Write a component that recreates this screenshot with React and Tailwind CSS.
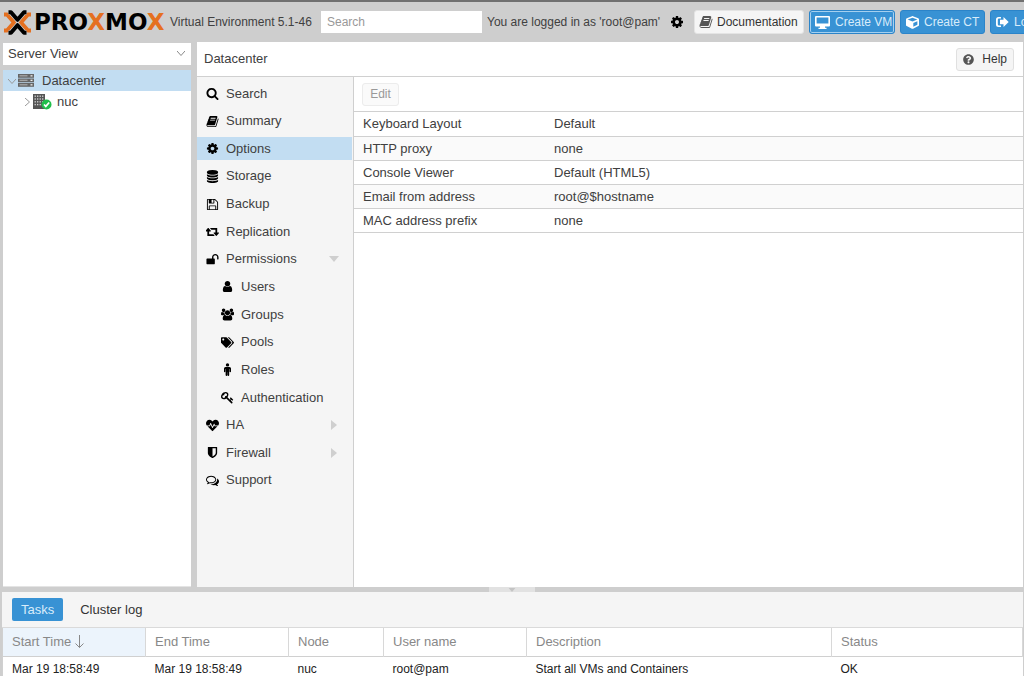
import { useState } from 'react'
import { FaCube, FaHeartbeat, FaQuestionCircle, FaTags } from 'react-icons/fa'

// ── ICONS ──
function Glyph({ d, className, viewBox = '0 0 1792 1792' }) {
  return (
    <svg viewBox={viewBox} className={className} fill="currentColor" aria-hidden="true">
      <path d={d} />
    </svg>
  )
}

const PATHS = {
  search: 'M1216 832q0-185-131.5-316.5t-316.5-131.5-316.5 131.5-131.5 316.5 131.5 316.5 316.5 131.5 316.5-131.5 131.5-316.5zm512 832q0 52-38 90t-90 38q-54 0-90-38l-343-342q-179 124-399 124-143 0-273.5-55.5t-225-150-150-225-55.5-273.5 55.5-273.5 150-225 225-150 273.5-55.5 273.5 55.5 225 150 150 225 55.5 273.5q0 220-124 399l343 343q37 37 37 90z',
  book: 'M1703 478q40 57 18 129l-275 906q-19 64-76.5 107.5t-122.5 43.5h-923q-77 0-148.5-53.5t-99.5-131.5q-24-67-2-127 0-4 3-27t4-37q1-8-3-21.5t-3-19.5q2-11 8-21t16.5-23.5 16.5-23.5q23-38 45-91.5t30-91.5q3-10 .5-30t-.5-28q3-11 17-28t17-23q21-36 42-92t25-90q1-9-2.5-32t.5-28q4-13 22-30.5t22-22.5q19-26 42.5-84.5t27.5-96.5q1-8-3-25.5t-2-26.5q2-8 9-18t18-23 17-21q8-12 16.5-30.5t15-35 16-36 19.5-32 26.5-23.5 36-11.5 47.5 5.5l-1 3q38-9 51-9h761q74 0 114 56t18 130l-274 906q-36 119-71.5 153.5t-128.5 34.5h-869q-27 0-38 15-11 16-1 43 24 70 144 70h923q29 0 56-15.5t35-41.5l300-987q7-22 5-57 38 15 59 43zm-1064 2q-4 13 2 22.5t20 9.5h608q13 0 25.5-9.5t16.5-22.5l21-64q4-13-2-22.5t-20-9.5h-608q-13 0-25.5 9.5t-16.5 22.5zm-83 256q-4 13 2 22.5t20 9.5h608q13 0 25.5-9.5t16.5-22.5l21-64q4-13-2-22.5t-20-9.5h-608q-13 0-25.5 9.5t-16.5 22.5z',
  gear: 'M1152 896q0-106-75-181t-181-75-181 75-75 181 75 181 181 75 181-75 75-181zm512-109v222q0 12-8 23t-20 13l-185 28q-19 54-39 91 35 50 107 138 10 12 10 25t-9 23q-27 37-99 108t-94 71q-12 0-26-9l-138-108q-44 23-91 38-16 136-29 186-7 28-36 28h-222q-14 0-24.5-8.5t-11.5-21.5l-28-184q-49-16-90-37l-141 107q-10 9-25 9-14 0-25-11-126-114-165-168-7-10-7-23 0-12 8-23 15-21 51-66.5t54-70.5q-27-50-41-99l-183-27q-13-2-21-12.5t-8-23.5v-222q0-12 8-23t19-13l186-28q14-46 39-92-40-57-107-138-10-12-10-24 0-10 9-23 26-36 98.5-107.5t94.5-71.5q13 0 26 10l138 107q44-23 91-38 16-136 29-186 7-28 36-28h222q14 0 24.5 8.5t11.5 21.5l28 184q49 16 90 37l142-107q9-9 24-9 13 0 25 10 129 119 165 170 7 8 7 22 0 12-8 23-15 21-51 66.5t-54 70.5q26 50 41 98l183 28q13 2 21 12.5t8 23.5z',
  database: 'M896 768q237 0 443-43t325-127v170q0 69-103 128t-280 93.5-385 34.5-385-34.5-280-93.5-103-128v-170q119 84 325 127t443 43zm0 768q237 0 443-43t325-127v170q0 69-103 128t-280 93.5-385 34.5-385-34.5-280-93.5-103-128v-170q119 84 325 127t443 43zm0-384q237 0 443-43t325-127v170q0 69-103 128t-280 93.5-385 34.5-385-34.5-280-93.5-103-128v-170q119 84 325 127t443 43zm0-1152q208 0 385 34.5t280 93.5 103 128v128q0 69-103 128t-280 93.5-385 34.5-385-34.5-280-93.5-103-128v-128q0-69 103-128t280-93.5 385-34.5z',
  floppy: 'M512 1536h768v-384h-768v384zm896 0h128v-896q0-14-10-38.5t-20-34.5l-281-281q-10-10-34-20t-39-10v416q0 40-28 68t-68 28h-576q-40 0-68-28t-28-68v-416h-128v1280h128v-416q0-40 28-68t68-28h832q40 0 68 28t28 68v416zm-384-928v-320q0-13-9.5-22.5t-22.5-9.5h-192q-13 0-22.5 9.5t-9.5 22.5v320q0 13 9.5 22.5t22.5 9.5h192q13 0 22.5-9.5t9.5-22.5zm640 32v928q0 40-28 68t-68 28h-1344q-40 0-68-28t-28-68v-1344q0-40 28-68t68-28h928q40 0 88 20t76 48l280 280q28 28 48 76t20 88z',
  retweet: 'M1280 1504q0 13-9.5 22.5t-22.5 9.5h-960q-8 0-13.5-2t-9-7-5.5-8-3-11.5-1-11.5v-600h-192q-26 0-45-19t-19-45q0-24 15-41l320-384q19-22 49-22t49 22l320 384q15 17 15 41 0 26-19 45t-45 19h-192v384h576q16 0 25 11l160 192q7 10 7 21zm640-416q0 24-15 41l-320 384q-20 23-49 23t-49-23l-320-384q-15-17-15-41 0-26 19-45t45-19h192v-384h-576q-16 0-25-12l-160-192q-7-9-7-20 0-13 9.5-22.5t22.5-9.5h960q8 0 13.5 2t9 7 5.5 8 3 11.5 1 11.5v600h192q26 0 45 19t19 45z',
  unlock: 'M1728 576v256q0 26-19 45t-45 19h-64q-26 0-45-19t-19-45v-256q0-106-75-181t-181-75-181 75-75 181v192h96q40 0 68 28t28 68v576q0 40-28 68t-68 28h-960q-40 0-68-28t-28-68v-576q0-40 28-68t68-28h672v-192q0-185 131.5-316.5t316.5-131.5 316.5 131.5 131.5 316.5z',
  user: 'M1536 1399q0 109-62.5 187t-150.5 78h-854q-88 0-150.5-78t-62.5-187q0-85 8.5-160.5t31.5-152 58.5-131 94-89 134.5-34.5q131 128 313 128t313-128q76 0 134.5 34.5t94 89 58.5 131 31.5 152 8.5 160.5zm-256-887q0 159-112.5 271.5t-271.5 112.5-271.5-112.5-112.5-271.5 112.5-271.5 271.5-112.5 271.5 112.5 112.5 271.5z',
  group: 'M657 896q-162 5-265 128h-134q-82 0-138-40.5t-56-118.5q0-353 124-353 6 0 43.5 21t97.5 42.5 119 21.5q67 0 133-23-5 37-5 66 0 159 90 283zm1071 637q0 120-73 189.5t-194 69.5h-874q-121 0-194-69.5t-73-189.5q0-53 3.5-103.5t14-109 26.5-108.5 43-97.5 62-81 85.5-53.5 111.5-20q10 0 43 21.5t73 48 107 48 135 21.5 135-21.5 107-48 73-48 43-21.5q61 0 111.5 20t85.5 53.5 62 81 43 97.5 26.5 108.5 14 109 3.5 103.5zm-1024-1277q0 106-75 181t-181 75-181-75-75-181 75-181 181-75 181 75 75 181zm704 384q0 159-112.5 271.5t-271.5 112.5-271.5-112.5-112.5-271.5 112.5-271.5 271.5-112.5 271.5 112.5 112.5 271.5zm576 225q0 78-56 118.5t-138 40.5h-134q-103-123-265-128 90-124 90-283 0-29-5-66 66 23 133 23 59 0 119-21.5t97.5-42.5 43.5-21q124 0 124 353zm-128-609q0 106-75 181t-181 75-181-75-75-181 75-181 181-75 181 75 75 181z',
  key: 'M832 512q0-80-56-136t-136-56-136 56-56 136q0 42 19 83-41-19-83-19-80 0-136 56t-56 136 56 136 136 56 136-56 56-136q0-42-19-83 41 19 83 19 80 0 136-56t56-136zm851 704q0 17-49 66t-66 49q-9 0-28.5-16t-36.5-33-38.5-40-24.5-26l-96 96 220 220q28 28 28 68 0 42-39 81t-81 39q-40 0-68-28l-671-671q-176 131-365 131-163 0-265.5-102.5t-102.5-265.5q0-160 95-313t248-248 313-95q163 0 265.5 102.5t102.5 265.5q0 189-131 365l355 355 96-96q-3-3-26-24.5t-40-38.5-33-36.5-16-28.5q0-17 49-66t66-49q13 0 23 10 6 6 46 44.5t82 79.5 86.5 86 73 78 28.5 41z',
  shield: 'M1344 960v-640h-448v1137q119-63 213-137 235-184 235-360zm192-768v768q0 86-33.5 170.5t-83 150-118 127.5-126.5 103-121 77.5-89.5 49.5-42.5 20q-12 6-26 6t-26-6q-16-7-42.5-20t-89.5-49.5-121-77.5-126.5-103-118-127.5-83-150-33.5-170.5v-768q0-26 19-45t45-19h1152q26 0 45 19t19 45z',
  comments: 'M704 384q-153 0-286 52t-211.5 141-78.5 191q0 82 53 158t149 132l97 56-35 84q34-20 62-39l44-31 53 10q78 14 153 14 153 0 286-52t211.5-141 78.5-191-78.5-191-211.5-141-286-52zm0-128q191 0 353.5 68.5t256.5 186.5 94 257-94 257-256.5 186.5-353.5 68.5q-86 0-176-16-124 88-278 128-36 9-86 16h-3q-11 0-20.5-8t-11.5-21q-1-3-1-6.5t.5-6.5 2-6l2.5-5 3.5-5.5 4-5 4.5-5 4-4.5q5-6 23-25t26-29.5 22.5-29 25-38.5 20.5-44q-124-72-195-177t-71-224q0-139 94-257t256.5-186.5 353.5-68.5zm822 1169q10 24 20.5 44t25 38.5 22.5 29 26 29.5 23 25q1 1 4 4.5t4.5 5 4 5 3.5 5.5l2.5 5 2 6 .5 6.5-1 6.5q-3 14-13 22t-22 7q-50-7-86-16-154-40-278-128-90 16-176 16-271 0-472-132 58 4 88 4 161 0 309-45t264-129q125-92 192-212t67-254q0-77-23-152 129 71 204 178t75 230q0 120-71 224.5t-195 176.5z',
}

const SearchIcon = (props) => <Glyph d={PATHS.search} {...props} />
const BookIcon = (props) => <Glyph d={PATHS.book} {...props} />
const GearIcon = (props) => <Glyph d={PATHS.gear} {...props} />
const DatabaseIcon = (props) => <Glyph d={PATHS.database} {...props} />
const FloppyIcon = (props) => <Glyph d={PATHS.floppy} {...props} />
const RetweetIcon = (props) => <Glyph d={PATHS.retweet} viewBox="64 128 1856 1536" {...props} />
const UnlockIcon = (props) => <Glyph d={PATHS.unlock} {...props} />
const UserIcon = (props) => <Glyph d={PATHS.user} {...props} />
const GroupIcon = (props) => <Glyph d={PATHS.group} viewBox="64 0 1920 1792" {...props} />
const KeyIcon = (props) => <Glyph d={PATHS.key} {...props} />
const ShieldIcon = (props) => <Glyph d={PATHS.shield} {...props} />
const CommentsIcon = (props) => <Glyph d={PATHS.comments} {...props} />

function MaleIcon({ className }) {
  return (
    <svg viewBox="0 0 13 13" className={className} fill="currentColor" aria-hidden="true">
      <circle cx="6.500" cy="1.900" r="1.700" />
      <path d="M4.500 4h4q1.500 0 1.500 1.500v3q0 .8-.7.8t-.8-.8V6h-.3v6q0 .9-.8.9t-.9-.9V9.200h-.2V12q0 .9-.8.9t-.9-.9V6h-.3v2.500q0 .8-.7.8T3 8.500v-3Q3 4 4.500 4z" />
    </svg>
  )
}

function LogoMark() {
  return (
    <svg viewBox="0 0 27 25" className="w-[27px] h-[25px] shrink-0" fill="none" strokeWidth="4.600" strokeLinejoin="round" aria-hidden="true">
      <path d="M0 4.500h3l7 8-7 8H0" stroke="#e57020" strokeWidth="4" />
      <path d="M27 4.500h-3l-7 8 7 8h3" stroke="#e57020" strokeWidth="4" />
      <path d="M4.500 2h2.500l6.500 7.500L20 2h2.500" stroke="#cecece" strokeWidth="5.500" />
      <path d="M4.500 23h2.500l6.500-7.500L20 23h2.500" stroke="#cecece" strokeWidth="5.500" />
      <path d="M4.500 2.300h2.500l6.500 7.500L20 2.300h2.500" stroke="#000" strokeWidth="4" />
      <path d="M4.500 22.700h2.500l6.500-7.500 6.500 7.500h2.500" stroke="#000" strokeWidth="4" />
    </svg>
  )
}

function MonitorIcon() {
  return (
    <svg viewBox="0 0 15 13" className="w-[15px] h-[13px] shrink-0" fill="#fff" aria-hidden="true">
      <path fillRule="evenodd" d="M1 0h13q1 0 1 1v8.500q0 1-1 1h-4v1.200h1.500V13h-8v-1.300H5v-1.200H1q-1 0-1-1V1q0-1 1-1zm.600 1.600v5.800h11.800V1.600z" />
    </svg>
  )
}

function SignOutIcon() {
  return (
    <svg viewBox="0 0 13 12" className="w-[13px] h-3 shrink-0" fill="#fff" aria-hidden="true">
      <path d="M5 1v1.500H3q-1.200 0-1.200 1.200v4.600Q1.800 9.500 3 9.500h2V11H2.600Q0 11 0 8.500v-5Q0 1 2.600 1z" />
      <path d="M7.500 1.100 12.700 6l-5.200 4.900V8.300H4V3.700h3.500z" />
    </svg>
  )
}

function ServerIcon() {
  return (
    <svg viewBox="0 0 16 13" className="w-4 h-[13px]" aria-hidden="true">
      {[0, 4.5, 9].map((y) => (
        <g key={y}>
          <rect x="0" y={y} width="16" height="3.800" fill="#666" />
          <rect x="1.500" y={y + 1.2} width="8" height="1.200" fill="#aaa" />
          <rect x="12.500" y={y + 1.2} width="2" height="1.300" fill="#eee" />
        </g>
      ))}
    </svg>
  )
}

function NodeIcon() {
  return (
    <svg viewBox="0 0 19 16" className="w-[19px] h-4" aria-hidden="true">
      <path d="M0 0h12v15H0z" fill="#555" />
      {[1.5, 4.3, 7.1, 9.9].map((y) =>
        [1.6, 4.1, 6.6, 9.1].map((x) => <rect key={`${x}-${y}`} x={x} y={y} width="1.200" height="1.400" fill="#ddd" />)
      )}
      <circle cx="13.500" cy="10.500" r="5" fill="#21bf4b" />
      <path d="m11 10.500 1.800 1.900 3.400-3.900" fill="none" stroke="#fff" strokeWidth="1.700" />
    </svg>
  )
}

function Chevron({ className }) {
  return (
    <svg viewBox="0 0 8 8" className={className} fill="none" stroke="currentColor" aria-hidden="true">
      <path d="m0 2 4 4.500L8 2" />
    </svg>
  )
}

function Triangle({ className }) {
  return (
    <svg viewBox="0 0 10 6" className={className} fill="currentColor" aria-hidden="true">
      <path d="M0 0h10L5 6z" />
    </svg>
  )
}

// ── DATA ──
const MENU = [
  { label: 'Search', icon: SearchIcon },
  { label: 'Summary', icon: BookIcon },
  { label: 'Options', icon: GearIcon },
  { label: 'Storage', icon: DatabaseIcon },
  { label: 'Backup', icon: FloppyIcon },
  { label: 'Replication', icon: RetweetIcon },
  { label: 'Permissions', icon: UnlockIcon, arrow: 'down' },
  { label: 'Users', icon: UserIcon, child: true },
  { label: 'Groups', icon: GroupIcon, child: true },
  { label: 'Pools', icon: FaTags, child: true },
  { label: 'Roles', icon: MaleIcon, child: true },
  { label: 'Authentication', icon: KeyIcon, child: true },
  { label: 'HA', icon: FaHeartbeat, arrow: 'right' },
  { label: 'Firewall', icon: ShieldIcon, arrow: 'right' },
  { label: 'Support', icon: CommentsIcon },
]

const OPTIONS = [
  ['Keyboard Layout', 'Default'],
  ['HTTP proxy', 'none'],
  ['Console Viewer', 'Default (HTML5)'],
  ['Email from address', 'root@$hostname'],
  ['MAC address prefix', 'none'],
]

const TASK_COLUMNS = [
  { label: 'Start Time', width: 'w-[143px]', sorted: true },
  { label: 'End Time', width: 'w-[143px]' },
  { label: 'Node', width: 'w-[95px]' },
  { label: 'User name', width: 'w-[143px]' },
  { label: 'Description', width: 'w-[305px]' },
  { label: 'Status', width: 'w-auto' },
]

const TASKS = [
  ['Mar 19 18:58:49', 'Mar 19 18:58:49', 'nuc', 'root@pam', 'Start all VMs and Containers', 'OK'],
]

const blueButton =
  'flex items-center gap-[5px] h-6 px-[5px] rounded-[3px] border border-[#2b84c9] bg-[#3892d4] text-[#d8ecfa] whitespace-nowrap shrink-0'

function Header() {
  return (
    <header className="flex items-center h-10 shrink-0 pl-1 overflow-hidden whitespace-nowrap text-xs">
      <LogoMark />
      <span className="w-[136px] pl-px ml-[2px] shrink-0 font-['DejaVu_Sans'] font-bold text-[23px] leading-6 text-black">
        PRO<span className="text-[#e57020]">X</span>MO<span className="text-[#e57020]">X</span>
      </span>
      <span className="w-[148px] pl-px shrink-0">Virtual Environment 5.1-46</span>
      <input
        type="search"
        aria-label="Search"
        placeholder="Search"
        className="w-[161px] h-[22px] ml-1 px-1.5 shrink-0 bg-white outline-none placeholder:text-[#999]"
      />
      <span className="w-[184px] pl-[5px] shrink-0">You are logged in as 'root@pam'</span>
      <button aria-label="User settings" className="w-7 pl-1 shrink-0 text-black">
        <GearIcon className="size-[14px]" />
      </button>
      <div className="flex gap-[5px] shrink-0">
        <button className="flex items-center gap-1 w-[110px] h-6 px-1 shrink-0 rounded-[3px] border border-[#e4e4e4] bg-[#f5f5f5] text-[#333]">
          <BookIcon className="size-[14px] shrink-0 text-[#555]" />
          Documentation
        </button>
        <button className={`${blueButton} w-[86px] shadow-[inset_0_0_0_1px_#a5d0ef]`}>
          <MonitorIcon />
          Create VM
        </button>
        <button className={`${blueButton} w-[85px]`}>
          <FaCube className="size-[13px] shrink-0 text-white" />
          Create CT
        </button>
        <button className={`${blueButton} w-[75px]`}>
          <SignOutIcon />
          Logout
        </button>
      </div>
    </header>
  )
}

function ResourceTree() {
  return (
    <aside className="flex flex-col w-[188px] shrink-0 pt-px">
      <div className="relative">
        <select aria-label="View" className="appearance-none block w-full h-[22px] px-[5px] bg-white outline-none">
          <option>Server View</option>
        </select>
        <Chevron className="absolute right-[6px] top-[6px] size-2 text-[#888] pointer-events-none" />
      </div>
      <ul role="tree" className="flex-1 mt-[5px] bg-white border-b border-[#e4e4e4]">
        <li role="treeitem" aria-expanded="true" aria-selected="true" className="flex items-center h-[21px] pl-[5px] bg-[#c2ddf2]">
          <Chevron className="size-2 mr-[2px] text-[#999]" />
          <ServerIcon />
          <span className="pl-2">Datacenter</span>
        </li>
        <li role="treeitem" aria-expanded="false" className="flex items-center h-[22px] pl-5">
          <Chevron className="size-2 mr-[2px] -rotate-90 text-[#999]" />
          <NodeIcon />
          <span className="pl-[5px]">nuc</span>
        </li>
      </ul>
    </aside>
  )
}

function SideMenu({ active, onSelect }) {
  return (
    <nav className="w-[157px] shrink-0 pt-[5px] pr-px bg-[#f5f5f5] border-r border-[#cfcfcf]">
      <ul className="flex flex-col justify-between h-[410px]">
        {MENU.map(({ label, icon: Icon, child, arrow }) => (
          <li key={label}>
            <button
              onClick={() => onSelect(label)}
              className={`flex items-center w-full h-[23px] pr-[13px] text-left ${child ? 'pl-6' : 'pl-[9px]'} ${
                active === label ? 'bg-[#c2ddf2]' : ''
              }`}
            >
              <span className="flex justify-center w-[13px] text-black">
                <Icon className="size-[13px] shrink-0" />
              </span>
              <span className="flex-1 pl-[7px]">{label}</span>
              {arrow === 'down' && <Triangle className="w-[10px] h-[6px] text-[#cfcfcf]" />}
              {arrow === 'right' && <Triangle className="w-[10px] h-[6px] -rotate-90 text-[#cfcfcf]" />}
            </button>
          </li>
        ))}
      </ul>
    </nav>
  )
}

function OptionsPanel() {
  return (
    <section className="flex-1 min-w-0">
      <div className="flex items-center h-[35px] px-2 border-b border-[#d0d0d0]">
        <button disabled className="w-[37px] h-[23px] rounded-[3px] border border-[#ececec] bg-[#fafafa] text-xs text-[#999]">
          Edit
        </button>
      </div>
      <table className="w-full table-fixed">
        <tbody>
          {OPTIONS.map(([name, value]) => (
            <tr key={name} className="h-6 border-b border-[#d0d0d0] even:bg-[#fafafa]">
              <th scope="row" className="w-[191px] px-[9px] pt-px text-left font-normal">{name}</th>
              <td className="px-[9px] pt-px">{value}</td>
            </tr>
          ))}
        </tbody>
      </table>
    </section>
  )
}

function TaskPanel() {
  const [tab, setTab] = useState('Tasks')

  return (
    <footer className="h-[84px] shrink-0 ml-[2px] mr-px overflow-hidden bg-white">
      <div role="tablist" className="flex items-center gap-2 h-9 px-[10px] bg-[#f5f5f5] border-b border-[#dadada]">
        {['Tasks', 'Cluster log'].map((label) => (
          <button
            key={label}
            role="tab"
            aria-selected={tab === label}
            onClick={() => setTab(label)}
            className={`h-[23px] px-[9px] rounded-[2px] ${tab === label ? 'bg-[#3892d4] text-[#d8ecfa]' : 'text-[#333]'}`}
          >
            {label}
          </button>
        ))}
      </div>
      <table className="w-full table-fixed border-l border-[#d0d0d0]">
        <thead>
          <tr className="h-7 border-b border-[#d0d0d0]">
            {TASK_COLUMNS.map(({ label, width, sorted }) => (
              <th
                key={label}
                scope="col"
                className={`${width} px-[9px] text-left font-normal text-[#888] border-r border-[#d8d8d8] ${sorted ? 'bg-[#ecf4fc]' : ''}`}
              >
                <span className="flex items-center gap-1">
                  {label}
                  {sorted && (
                    <svg viewBox="0 0 9 13" className="w-[9px] h-[13px]" fill="none" stroke="currentColor" aria-hidden="true">
                      <path d="M4.500 0v12.500M.500 8.500l4 4 4-4" />
                    </svg>
                  )}
                </span>
              </th>
            ))}
          </tr>
        </thead>
        <tbody>
          {TASKS.map((row) => (
            <tr key={row[0]} className="h-[26px] text-xs text-[#222]">
              {row.map((cell, i) => (
                <td key={i} className="px-[9px] whitespace-nowrap">{cell}</td>
              ))}
            </tr>
          ))}
        </tbody>
      </table>
    </footer>
  )
}

export default function App() {
  const [active, setActive] = useState('Options')

  return (
    <div className="flex flex-col h-screen overflow-hidden border-t-2 border-[#707070] bg-[#cecece] font-['Liberation_Sans',Arial,sans-serif] text-[13px] leading-4 text-[#404040]">
      <Header />

      {/* ── MAIN AREA ── */}
      <div className="flex flex-1 min-h-0 gap-1.5 pl-[3px] pr-px">
        <ResourceTree />
        <main className="flex flex-col flex-1 min-w-0 bg-white">
          <div className="flex items-center justify-between h-[35px] shrink-0 pl-[7px] pr-[9px] border-b border-[#d0d0d0]">
            <h1>Datacenter</h1>
            <button className="flex items-center gap-2 h-[23px] px-[6px] rounded-[3px] border border-[#e0e0e0] bg-[#f5f5f5] text-xs text-[#333]">
              <FaQuestionCircle className="size-[11px] text-[#555]" />
              Help
            </button>
          </div>
          <div className="flex flex-1 min-h-0">
            <SideMenu active={active} onSelect={setActive} />
            <OptionsPanel />
          </div>
        </main>
      </div>

      {/* ── SPLITTER ── */}
      <div className="flex justify-center h-[5px] shrink-0">
        <button aria-label="Collapse log" className="flex items-center justify-center w-[46px] bg-[#e2e2e2]">
          <Triangle className="w-2 h-1 text-[#c4c4c4]" />
        </button>
      </div>

      <TaskPanel />
    </div>
  )
}
